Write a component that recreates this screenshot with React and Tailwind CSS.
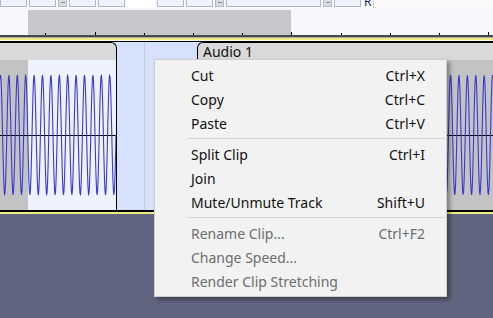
import React from "react";

// sampled sine, drawn as one polyline
function wavePoints(width, phase) {
  const pts = [];
  for (let x = 0; x <= width; x += 0.5) {
    const y = 75 - 60 * Math.sin((2 * Math.PI * x) / 8.4 + phase);
    pts.push(`${x},${y.toFixed(2)}`);
  }
  return pts.join(" ");
}

function Wave({ width, phase = 0 }) {
  return (
    <svg className="absolute inset-0" width={width} height="150">
      <line x1="0" y1="75.5" x2={width} y2="75.5" stroke="#000" strokeWidth="1" />
      <polyline points={wavePoints(width, phase)} fill="none" stroke="#3a3ad0" strokeWidth="1.1" />
    </svg>
  );
}

function ToolBox({ w, small }) {
  return (
    <div
      className={`h-[14px] -mt-[7px] mr-[2px] border border-[#aeb9cf] flex items-end justify-center pb-[3px] ${small ? "bg-[#dcdcdc]" : "bg-[#eef3fd]"}`}
      style={{ width: w }}
    >
      {small && <div className="w-[4px] h-px bg-[#8a8a8a]" />}
    </div>
  );
}

function MenuItem({ label, keys, disabled }) {
  return (
    <div className={`h-[24px] flex items-center pl-[36px] pr-[21px] ${disabled ? "text-[#6d6d6d]" : "text-[#111]"}`}>
      <span className="flex-1">{label}</span>
      {keys && <span>{keys}</span>}
    </div>
  );
}

function Separator() {
  return (
    <div className="h-[7px] flex items-center pl-[32px] pr-[1px]">
      <div className="h-px w-full bg-[#d4d4d4]" />
    </div>
  );
}

export default function App() {
  return (
    <div className="relative w-[493px] h-[318px] overflow-hidden flex flex-col bg-[#62657f] font-['Noto_Sans',sans-serif]">
      {/* toolbar strip, clipped at the top */}
      <div className="h-[8px] flex overflow-hidden bg-[#fafafa] shrink-0">
        <ToolBox w={27} />
        <ToolBox w={27} />
        <ToolBox w={9} small />
        <ToolBox w={27} />
        <ToolBox w={27} />
        <div className="w-[28px] mr-[2px] bg-white" />
        <ToolBox w={27} />
        <ToolBox w={27} />
        <ToolBox w={9} small />
        <ToolBox w={95} />
        <ToolBox w={9} small />
        <ToolBox w={27} />
        <div className="-mt-[5px] text-[12px] leading-[13px] text-[#1b1b6e] pl-[1px] pr-[2px] border-r border-[#c6ccd8]">R</div>
      </div>

      {/* timeline ruler */}
      <div className="relative h-[27px] bg-[#f6f8fe] shrink-0 pl-[28px] pt-[2px]">
        <div className="w-[263px] h-full bg-[#c6c7cb]" />
        <svg className="absolute inset-0" width="493" height="27">
          {[45, 144, 193, 242, 341, 390, 439].map((x) => (
            <line key={x} x1={x + 0.5} y1="25" x2={x + 0.5} y2="27" stroke="#000" />
          ))}
          {[95, 291, 488].map((x) => (
            <line key={x} x1={x + 0.5} y1="24" x2={x + 0.5} y2="27" stroke="#000" />
          ))}
        </svg>
      </div>

      {/* track top border */}
      <div className="h-[2px] bg-[#4a4a4a] shrink-0" />
      <div className="h-px bg-[#a8a8a8] shrink-0" />
      <div className="h-[2px] bg-[#efec82] shrink-0" />
      <div className="h-px bg-[#fbfbe8] shrink-0" />
      <div className="h-px bg-black shrink-0" />

      {/* track */}
      <div className="h-[168px] flex shrink-0 bg-[#d6e1fb]">
        {/* clip 1 */}
        <div className="w-[117px] flex flex-col">
          <div className="h-[18px] bg-[#d9d9d9] border-t border-r border-black rounded-tr-[6px]" />
          <div className="relative flex-1 flex border-r border-black overflow-hidden">
            <div className="w-[28px] bg-[#c3c3c3]" />
            <div className="flex-1 bg-[#edf2fe]" />
            <Wave width={116} phase={1.2} />
          </div>
        </div>

        {/* gap between clips */}
        <div className="w-[80px] flex">
          <div className="w-[27px]" />
          <div className="w-px bg-[#c4c8d2]" />
        </div>

        {/* clip 2 */}
        <div className="flex-1 flex flex-col">
          <div className="h-[18px] bg-[#d9d9d9] border-t border-l border-black rounded-tl-[6px] pl-[5px] text-[14px] leading-[17px] text-[#111]">
            Audio 1
          </div>
          <div className="relative flex-1 flex overflow-hidden">
            <div className="w-[94px] bg-[#edf2fe]" />
            <div className="flex-1 bg-[#c3c3c3]" />
            <Wave width={296} phase={0.4} />
          </div>
        </div>
      </div>

      {/* track bottom border */}
      <div className="h-[2px] bg-black shrink-0" />
      <div className="h-[2px] bg-[#efec82] shrink-0" />
      <div className="flex-1" />

      {/* context menu */}
      <div className="absolute left-[154px] top-[59px] w-[293px] bg-[#f2f2f2] border border-[#cdcdcd] py-[3px] text-[14px] shadow-[3px_3px_4px_rgba(0,0,0,0.35)]">
        <MenuItem label="Cut" keys="Ctrl+X" />
        <MenuItem label="Copy" keys="Ctrl+C" />
        <MenuItem label="Paste" keys="Ctrl+V" />
        <Separator />
        <MenuItem label="Split Clip" keys="Ctrl+I" />
        <MenuItem label="Join" />
        <MenuItem label="Mute/Unmute Track" keys="Shift+U" />
        <Separator />
        <MenuItem label="Rename Clip..." keys="Ctrl+F2" disabled />
        <MenuItem label="Change Speed..." disabled />
        <MenuItem label="Render Clip Stretching" disabled />
      </div>
    </div>
  );
}
